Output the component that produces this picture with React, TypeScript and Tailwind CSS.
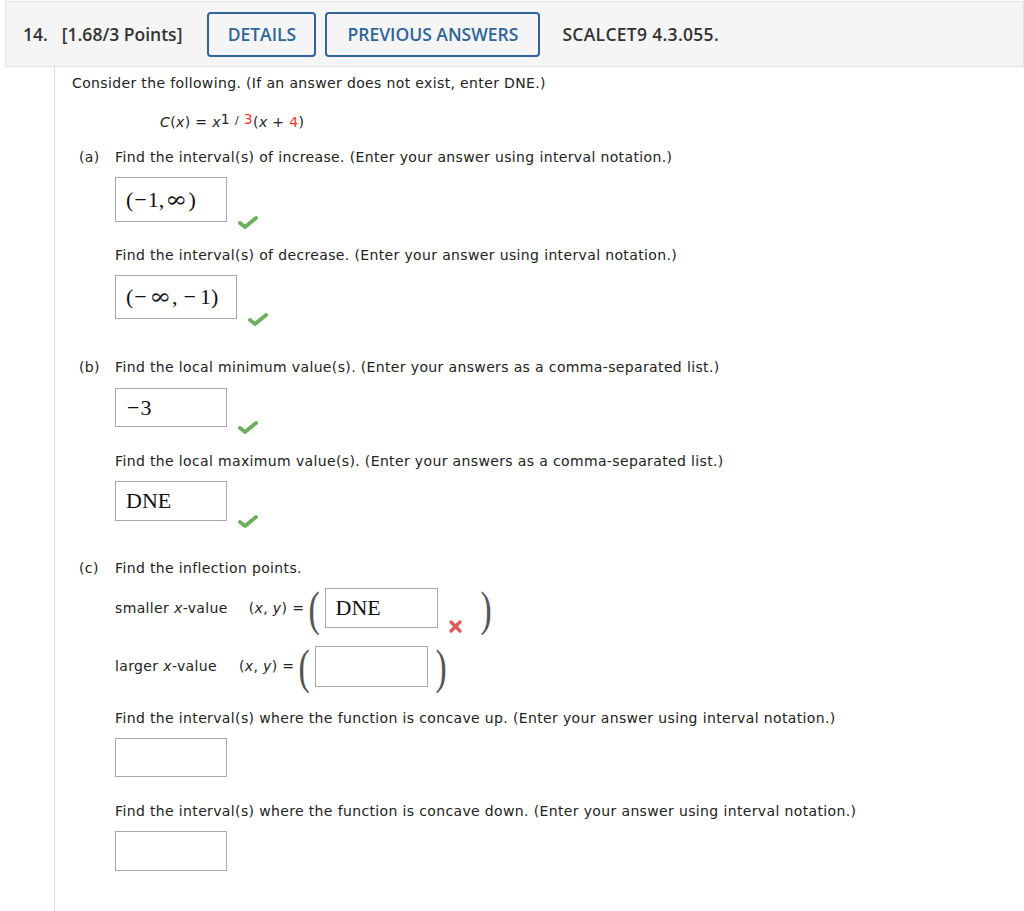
import type { ReactNode } from 'react'

const body = { fontFamily: '"DejaVu Sans", Verdana, sans-serif' }
const math = { fontFamily: '"Liberation Serif", "Times New Roman", serif' }

function Check() {
  return (
    <svg width="20" height="13" viewBox="0 0 20 13" className="shrink-0">
      <path d="M2 7 L7 11 L18 2" fill="none" stroke="#6cae5c" strokeWidth="3.8" strokeLinecap="round" strokeLinejoin="round" />
    </svg>
  )
}

function Cross() {
  return (
    <svg width="15" height="15" viewBox="0 0 15 15" className="shrink-0">
      <path d="M3 3 L12 12 M12 3 L3 12" stroke="#e05a5a" strokeWidth="3.4" strokeLinecap="round" />
    </svg>
  )
}

function Inf() {
  return (
    <span className="inline-block scale-x-[1.2] mx-[3px]" style={{ fontFamily: '"DejaVu Serif", serif' }}>
      ∞
    </span>
  )
}

function Minus() {
  return <span className="mx-[1px]">−</span>
}

function Box({ w, h, children }: { w: string; h: string; children?: ReactNode }) {
  return (
    <div
      className={`${w} ${h} border border-[#a9a9a9] bg-white flex items-center px-[10px] text-[22px] text-[#111] shrink-0 tracking-normal`}
      style={math}
    >
      {children}
    </div>
  )
}

function Answered({ children, w, h, mt }: { children?: ReactNode; w: string; h: string; mt: string }) {
  return (
    <div className={`flex items-end ${mt}`}>
      <Box w={w} h={h}>{children}</Box>
      <div className="ml-[11px] mb-[-7px]">
        <Check />
      </div>
    </div>
  )
}

function Paren({ side }: { side: 'l' | 'r' }) {
  return (
    <span
      className="text-[42px] leading-none text-[#555] inline-block scale-y-[1.18] scale-x-[0.8]"
      style={math}
    >
      {side === 'l' ? '(' : ')'}
    </span>
  )
}

export default function App() {
  return (
    <div className="w-[1024px] min-h-[911px] bg-white text-[#222]">
      <div
        className="ml-[5px] mt-[1px] h-[66px] bg-[#f5f5f5] border border-[#e2e2e2] flex items-center pl-[17px] text-[17.5px] font-semibold text-[#333]"
        style={{ fontFamily: '"Open Sans", sans-serif' }}
      >
        <span>14.</span>
        <span className="ml-[14px]">[1.68/3 Points]</span>
        <button className="ml-[25px] h-[45px] w-[109px] border-2 border-[#2f6597] rounded-[4px] text-[#2f6597] mt-[1px]">
          DETAILS
        </button>
        <button className="ml-[9px] h-[45px] w-[215px] border-2 border-[#2f6597] rounded-[4px] text-[#2f6597] mt-[1px]">
          PREVIOUS ANSWERS
        </button>
        <span className="ml-[22px] tracking-[0.3px]">SCALCET9 4.3.055.</span>
      </div>

      <div
        className="ml-[54px] border-l border-[#dddddd] min-h-[844px] pl-[17px] pt-[6px] text-[14px] leading-[20px] tracking-[0.36px]"
        style={body}
      >
        <p>Consider the following. (If an answer does not exist, enter DNE.)</p>

        <p className="mt-[19px] ml-[88px]">
          <i>C</i>(<i>x</i>) = <i>x</i>
          <sup className="text-[14px] relative -top-[3px]">
            1 <span className="text-[11px]">/</span> <span className="text-[#e33b2e]">3</span>
          </sup>
          (<i>x</i> + <span className="text-[#e33b2e]">4</span>)
        </p>

        <div className="mt-[15px] flex">
          <span className="ml-[7px] w-[36px]">(a)</span>
          <div className="flex flex-col">
            <p>Find the interval(s) of increase. (Enter your answer using interval notation.)</p>
            <Answered w="w-[112px]" h="h-[45px]" mt="mt-[10px]">
              (<Minus />1,<Inf />)
            </Answered>
            <p className="mt-[23px]">Find the interval(s) of decrease. (Enter your answer using interval notation.)</p>
            <Answered w="w-[122px]" h="h-[44px]" mt="mt-[10px]">
              (<Minus /><Inf />,<span className="ml-[5px]" /><Minus /><span className="ml-[3px]">1)</span>
            </Answered>
          </div>
        </div>

        <div className="mt-[38px] flex">
          <span className="ml-[7px] w-[36px]">(b)</span>
          <div className="flex flex-col">
            <p>Find the local minimum value(s). (Enter your answers as a comma-separated list.)</p>
            <Answered w="w-[112px]" h="h-[39px]" mt="mt-[11px]">
              <Minus />3
            </Answered>
            <p className="mt-[24px]">Find the local maximum value(s). (Enter your answers as a comma-separated list.)</p>
            <Answered w="w-[112px]" h="h-[40px]" mt="mt-[10px]">DNE</Answered>
          </div>
        </div>

        <div className="mt-[37px] flex">
          <span className="ml-[7px] w-[36px]">(c)</span>
          <div className="flex flex-col">
            <p>Find the inflection points.</p>

            <div className="mt-[8px] h-[44px] flex items-center">
              <span>
                smaller <i>x</i>-value
              </span>
              <span className="ml-[21px]">
                (<i>x</i>, <i>y</i>) =
              </span>
              <span className="ml-[3px]">
                <Paren side="l" />
              </span>
              <div className="ml-[3px] flex items-end">
                <Box w="w-[113px]" h="h-[40px]">DNE</Box>
                <div className="ml-[10px] mb-[-6px]">
                  <Cross />
                </div>
              </div>
              <span className="ml-[16px]">
                <Paren side="r" />
              </span>
            </div>

            <div className="mt-[14px] h-[44px] flex items-center">
              <span>
                larger <i>x</i>-value
              </span>
              <span className="ml-[22px]">
                (<i>x</i>, <i>y</i>) =
              </span>
              <span className="ml-[3px]">
                <Paren side="l" />
              </span>
              <div className="ml-[3px]">
                <Box w="w-[113px]" h="h-[41px]" />
              </div>
              <span className="ml-[6px]">
                <Paren side="r" />
              </span>
            </div>

            <p className="mt-[20px]">Find the interval(s) where the function is concave up. (Enter your answer using interval notation.)</p>
            <div className="mt-[10px]">
              <Box w="w-[112px]" h="h-[39px]" />
            </div>
            <p className="mt-[24px]">Find the interval(s) where the function is concave down. (Enter your answer using interval notation.)</p>
            <div className="mt-[10px]">
              <Box w="w-[112px]" h="h-[40px]" />
            </div>
          </div>
        </div>
      </div>
    </div>
  )
}
